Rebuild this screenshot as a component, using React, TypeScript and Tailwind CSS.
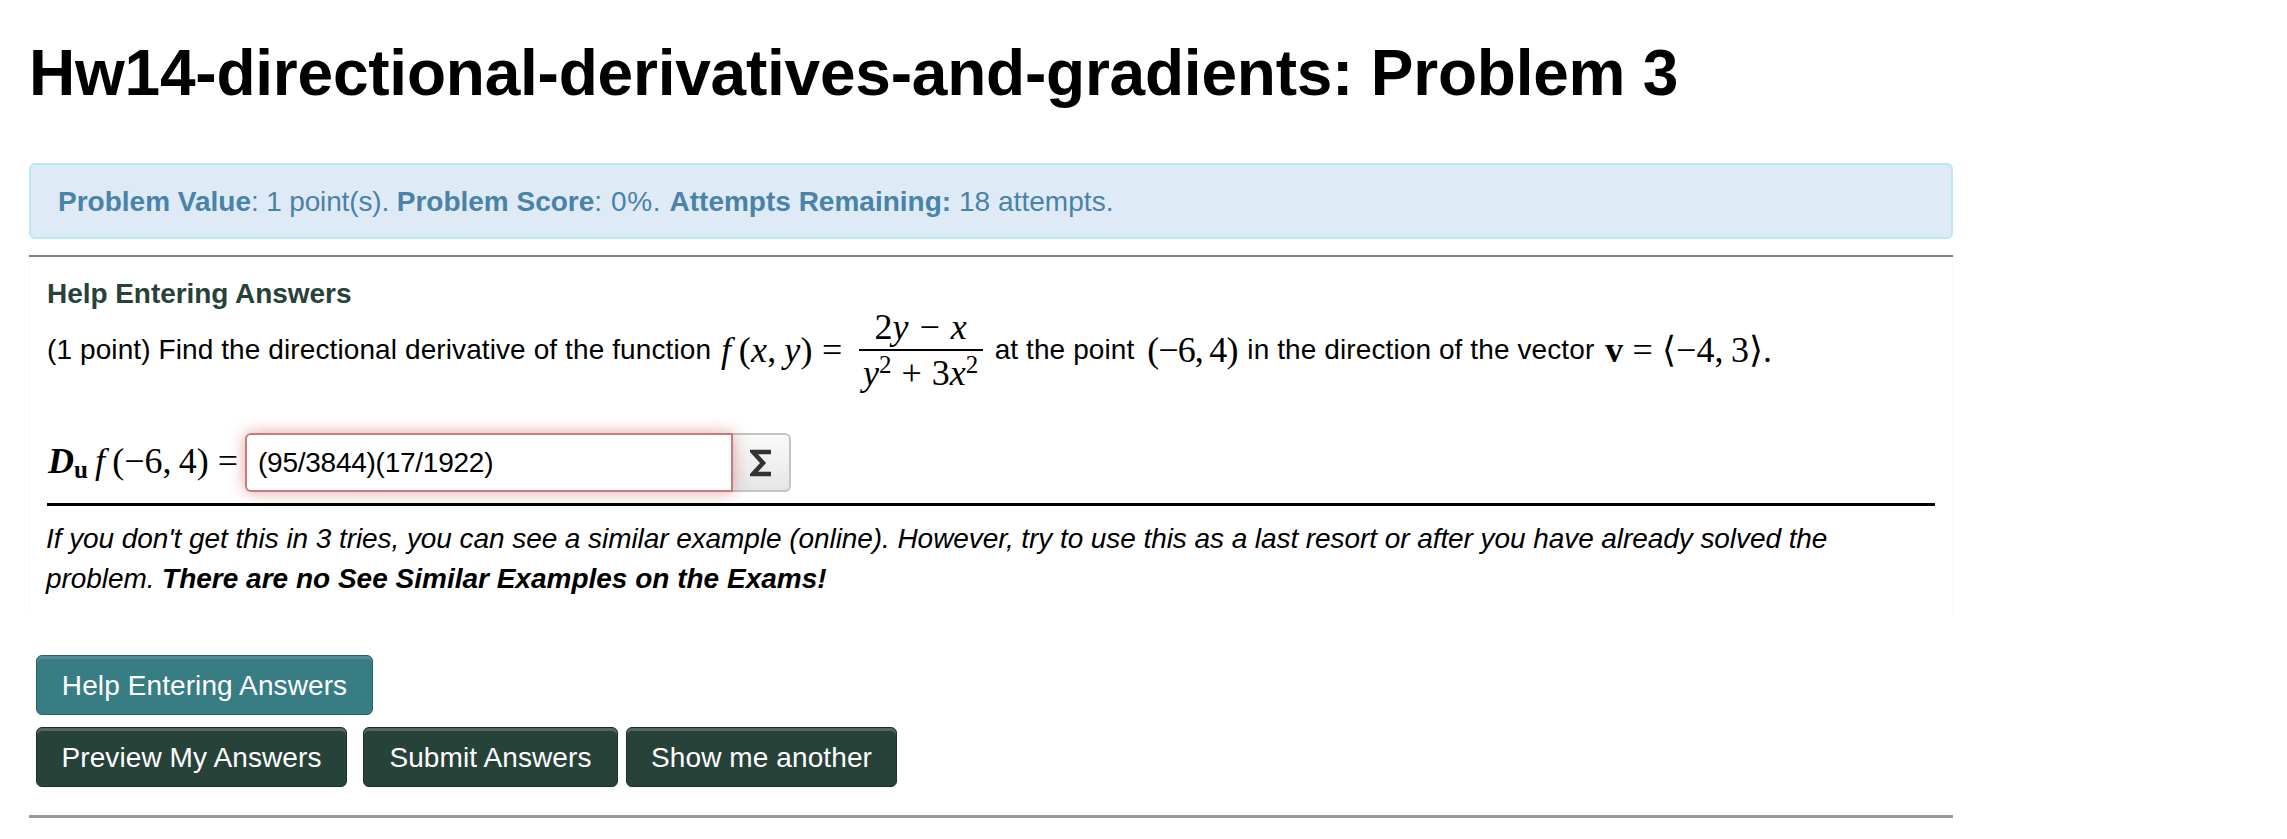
import React from "react";

const S = "font-['Liberation_Serif',serif] text-[36px] leading-none";
const I = ({ children }: { children: React.ReactNode }) => <i className="italic">{children}</i>;

const DarkBtn = ({ children, className = "" }: { children: React.ReactNode; className?: string }) => (
  <button className={`h-[60px] pt-[2px] rounded-[6px] bg-[#274239] border border-[#1c3029] shadow-[inset_0_3px_0_rgba(255,255,255,0.2),0_1px_2px_rgba(0,0,0,0.05)] text-white text-[28px] tracking-[0.1px] leading-none whitespace-nowrap ${className}`}>
    {children}
  </button>
);

export default function App() {
  return (
    <div className="min-h-[839px] bg-white pl-[29px] font-['Liberation_Sans',sans-serif] text-black overflow-hidden">
      <div className="w-[1924px]">
        <h1 className="pt-[33px] text-[64px] leading-[80px] font-bold tracking-[-0.22px] text-black whitespace-nowrap">
          Hw14-directional-derivatives-and-gradients: Problem 3
        </h1>

        <div className="mt-[50px] h-[76px] rounded-[6px] border-2 border-[#bce8f1] bg-[#deebf6] pl-[27px] pt-[2px] flex items-center text-[28px] text-[#4a82a8] whitespace-nowrap">
          <span>
            <b>Problem Value</b>
            <span className="tracking-[-0.15px]">: 1 point(s). </span>
            <b>Problem Score</b>
            <span className="tracking-[0.6px]">: 0%. </span>
            <b>Attempts Remaining:</b> <span className="tracking-[0.05px]">18 attempts.</span>
          </span>
        </div>

        <div className="mt-[16px] h-[2px] bg-[#808080]" />

        <div className="h-[357px] border-x border-[#fafafa] pl-[17px] pr-[17px]">
          <div className="pt-[19px] text-[28px] leading-[35px] font-bold tracking-[-0.05px] text-[#274239]">Help Entering Answers</div>

          <div className="flex items-center h-[78px] text-[28px] tracking-[0.1px] whitespace-nowrap">
            <span>(1 point) Find the directional derivative of the function&nbsp;</span>
            <span className={`${S} ml-[2px] tracking-[0.3px]`}>
              <I>f</I>&thinsp;(<I>x</I>,&thinsp;<I>y</I>) =
            </span>
            <span className={`${S} ml-[16px] mr-[12px] flex flex-col items-center w-[124px] tracking-normal`}>
              <span className="h-[38px] flex items-end pb-[4px]">
                2<I>y</I>
                <span className="mx-[11px]">−</span>
                <I>x</I>
              </span>
              <span className="h-[2px] w-full bg-black" />
              <span className="h-[38px] pt-[4px] whitespace-nowrap">
                <I>y</I>
                <sup className="text-[25px] top-[-12px]">2</sup>
                <span className="mx-[10px]">+</span>3<I>x</I>
                <sup className="text-[25px] top-[-12px]">2</sup>
              </span>
            </span>
            <span>at the point&nbsp;</span>
            <span className={`${S} tracking-[-0.9px] ml-[5px]`}>(−6,&thinsp;4)</span>
            <span className="ml-[2px]">&nbsp;in the direction of the vector&nbsp;</span>
            <span className={`${S} tracking-[0.1px] ml-[3px]`}>
              <b>v</b> = ⟨−4,&thinsp;3⟩.
            </span>
          </div>

          <div className="flex items-center mt-[44px] h-[59px]">
            <span className={`${S} whitespace-nowrap w-[198px] pb-[4px] pl-[1px]`}>
              <I>
                <b>D</b>
              </I>
              <b className="text-[25px] relative top-[5px]">u</b>
              <I>&thinsp;f</I>
              &thinsp;(−6,&thinsp;4) =
            </span>
            <div className="relative z-10 w-[488px] h-[59px] rounded-l-[6px] border-2 border-[#c97a7a] bg-white pl-[11px] flex items-center text-[28px] tracking-[-0.25px] leading-none shadow-[0_0_16px_rgba(205,90,90,0.55)]">
              (95/3844)(17/1922)
            </div>
            <div className="w-[58px] h-[59px] rounded-r-[6px] border-2 border-l-0 border-[#c4c4c4] bg-gradient-to-b from-[#fafafa] to-[#e6e6e6] flex items-center justify-center">
              <svg width="22" height="28" viewBox="0 0 22 28" fill="none" stroke="#333" strokeWidth="4.5">
                <path d="M21 3H3L13 14L3 25H21" />
              </svg>
            </div>
          </div>

          <div className="mt-[11px] h-[3px] bg-black" />

          <p className="mt-[13px] -ml-[1px] text-[28px] leading-[40px] italic tracking-[-0.07px]">
            If you don't get this in 3 tries, you can see a similar example (online). However, try to use this as a last resort or after you have already solved the
            problem. <b className="tracking-normal">There are no See Similar Examples on the Exams!</b>
          </p>
        </div>

        <div className="mt-[41px] pl-[7px]">
          <button className="block h-[60px] w-[337px] pt-[2px] rounded-[6px] bg-[#387d83] border border-[#2b6166] shadow-[inset_0_3px_0_rgba(255,255,255,0.12)] text-white text-[28px] tracking-[0.1px] leading-none">
            Help Entering Answers
          </button>
          <div className="flex mt-[12px]">
            <DarkBtn className="w-[311px]">Preview My Answers</DarkBtn>
            <DarkBtn className="ml-[16px] w-[255px]">Submit Answers</DarkBtn>
            <DarkBtn className="ml-[8px] w-[271px]">Show me another</DarkBtn>
          </div>
        </div>

        <div className="mt-[28px] h-[3px] bg-[#9a9a9a]" />
      </div>
    </div>
  );
}
